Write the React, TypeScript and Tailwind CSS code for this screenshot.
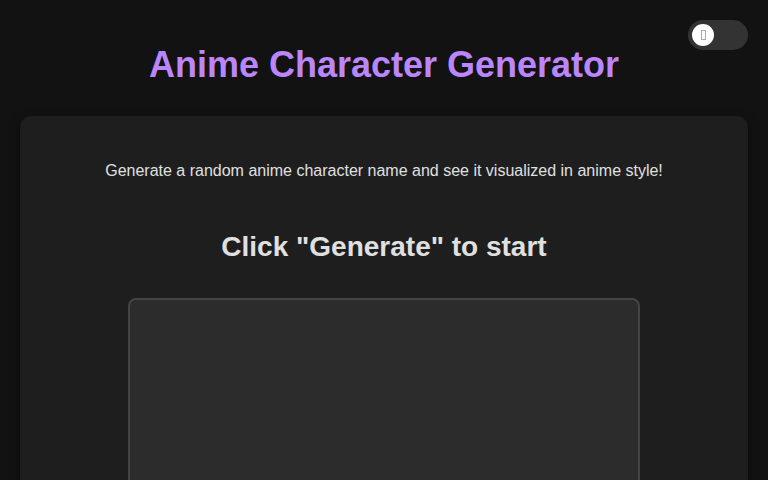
import React from "react";

export default function App() {
  return (
    <div
      className="min-h-[480px] bg-[#121212] text-[#e0e0e0] relative px-5"
      style={{ fontFamily: '"Liberation Sans", Arial, sans-serif' }}
    >
      <div className="absolute top-5 right-5 w-[60px] h-[30px] rounded-full bg-[#333333] flex items-center px-1">
        <div className="w-[22px] h-[22px] rounded-full bg-white flex items-center justify-center">
          <span className="block w-[5px] h-[10px] border border-[#aaaaaa]" />
        </div>
      </div>
      <h1 className="pt-[43px] text-center text-[36px] leading-[43px] font-bold text-[#bb86fc]">
        Anime Character Generator
      </h1>
      <div className="mt-[30px] bg-[#1e1e1e] rounded-xl shadow-[0_4px_12px_rgba(0,0,0,0.4)] pt-[43px] pb-10 flex flex-col items-center">
        <p className="text-base leading-6 text-[#e0e0e0]">
          Generate a random anime character name and see it visualized in anime style!
        </p>
        <h2 className="mt-[47px] text-[28px] leading-[34px] font-bold text-[#e0e0e0]">
          Click "Generate" to start
        </h2>
        <div className="mt-[34px] w-[512px] h-[400px] bg-[#2c2c2c] border-2 border-[#444444] rounded-lg" />
      </div>
    </div>
  );
}
